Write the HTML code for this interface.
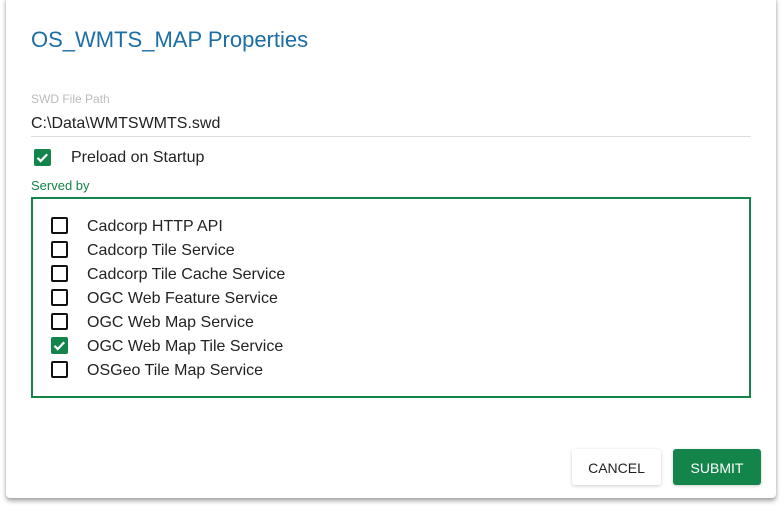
<!DOCTYPE html>
<html><head><style>
body{margin:0;width:783px;height:514px;background:#fff;font-family:"Liberation Sans",sans-serif;position:relative;overflow:hidden}
.dlg{position:absolute;left:6px;top:-4px;width:770px;height:502px;background:#fff;border-radius:4px;box-shadow:0 3px 5px rgba(0,0,0,.35),0 0 2px rgba(0,0,0,.12)}
.a{position:absolute}
.cb{position:absolute;width:13px;height:13px;border:2px solid #111;border-radius:2px}
.cb.on{background:#13844a;border-color:#13844a}
.cb.on svg{position:absolute;left:0;top:0}
.lbl{position:absolute;font-size:16px;color:#222}
.btn{position:absolute;height:36px;border-radius:3px;font-size:14px;text-align:center;line-height:39px}
</style></head><body>
<div class="dlg"></div>
<div class="a" style="left:31px;top:27px;font-size:22px;color:#1c6ea4">OS_WMTS_MAP Properties</div>
<div class="a" style="left:31px;top:92px;font-size:12px;color:#bbb">SWD File Path</div>
<div class="a" style="left:31px;top:115px;font-size:16px;color:#222">C:\Data\WMTSWMTS.swd</div>
<div class="a" style="left:31px;top:136px;width:720px;height:1px;background:#ddd"></div>
<div class="cb on" style="left:34px;top:149px"><svg width="13" height="13" viewBox="0 0 13 13"><path d="M1.5 6.8l3.2 3.2 6.5-6.8" stroke="#fff" stroke-width="2.2" fill="none"/></svg></div>
<div class="lbl" style="left:71px;top:149px">Preload on Startup</div>
<div class="a" style="left:31px;top:178px;font-size:13px;color:#13844a">Served by</div>
<div class="a" style="left:31px;top:197px;width:716px;height:197px;border:2px solid #13844a"></div>
<div class="cb" style="left:51px;top:217px"></div><div class="lbl" style="left:87px;top:218px">Cadcorp HTTP API</div>
<div class="cb" style="left:51px;top:241px"></div><div class="lbl" style="left:87px;top:242px">Cadcorp Tile Service</div>
<div class="cb" style="left:51px;top:265px"></div><div class="lbl" style="left:87px;top:266px">Cadcorp Tile Cache Service</div>
<div class="cb" style="left:51px;top:289px"></div><div class="lbl" style="left:87px;top:290px">OGC Web Feature Service</div>
<div class="cb" style="left:51px;top:313px"></div><div class="lbl" style="left:87px;top:314px">OGC Web Map Service</div>
<div class="cb on" style="left:51px;top:337px"><svg width="13" height="13" viewBox="0 0 13 13"><path d="M1.5 6.8l3.2 3.2 6.5-6.8" stroke="#fff" stroke-width="2.2" fill="none"/></svg></div><div class="lbl" style="left:87px;top:338px">OGC Web Map Tile Service</div>
<div class="cb" style="left:51px;top:361px"></div><div class="lbl" style="left:87px;top:362px">OSGeo Tile Map Service</div>
<div class="btn" style="left:572px;top:449px;width:89px;background:#fff;color:#222;box-shadow:0 1px 3px rgba(0,0,0,.2)">CANCEL</div>
<div class="btn" style="left:673px;top:449px;width:88px;background:#13844a;color:#fff;box-shadow:0 1px 3px rgba(0,0,0,.2)">SUBMIT</div>
</body></html>
